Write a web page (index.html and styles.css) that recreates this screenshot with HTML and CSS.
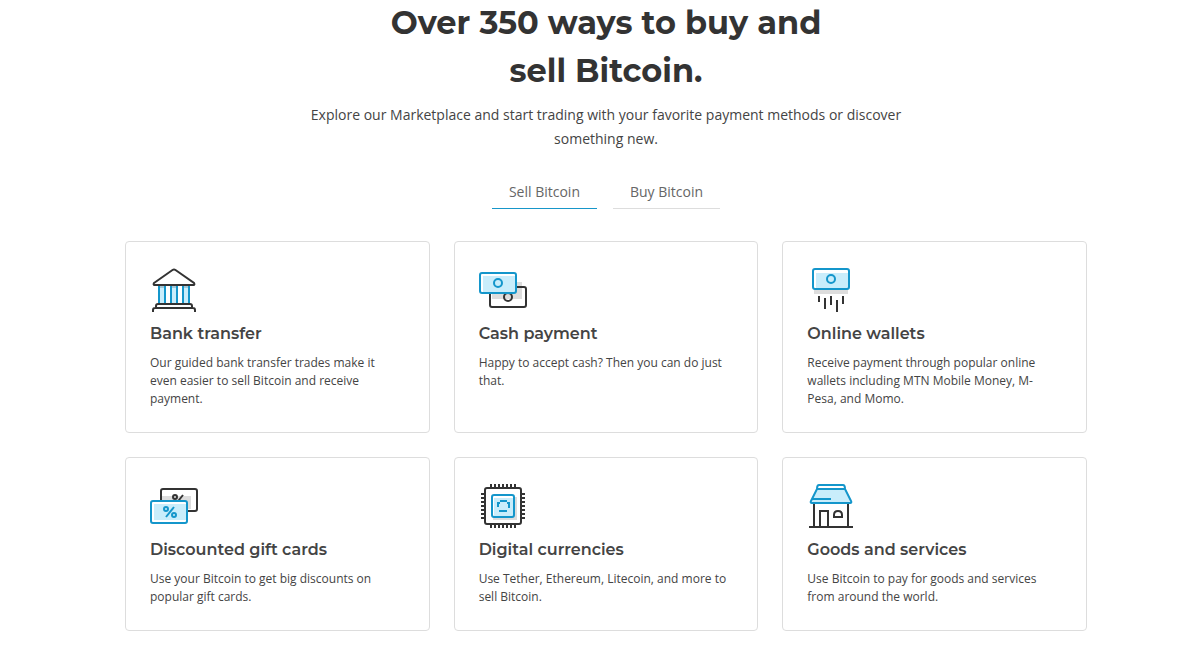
FILE: index.html
```html
<!DOCTYPE html>
<html lang="en">

<head>
  <meta charset="utf-8">
  <meta name="viewport" content="width=device-width, initial-scale=1">
  <title>Ways to buy and sell Bitcoin</title>
  <link rel="stylesheet" href="styles.css">
</head>

<body>

  <main class="marketplace">
    <header class="intro">
      <h1 class="intro-title">Over 350 ways to buy and sell Bitcoin.</h1>
      <p class="intro-text">Explore our Marketplace and start trading with your favorite payment methods or discover something new.</p>
    </header>

    <div class="tabs" role="tablist">
      <button class="tab active" type="button" role="tab" aria-selected="true">Sell Bitcoin</button>
      <button class="tab" type="button" role="tab" aria-selected="false">Buy Bitcoin</button>
    </div>

    <section class="cards">
      <article class="card">
        <svg class="icon" viewBox="0 0 48 48" aria-hidden="true">
          <path class="light" d="M9 19h6v19H9zM21 19h6v19h-6zM33 19h6v19h-6z"/>
          <path class="shade-blue" d="M9 19h6v3H9zM21 19h6v3h-6zM33 19h6v3h-6z"/>
          <path class="blue" d="M9 19v19M15 19v19M21 19v19M27 19v19M33 19v19M39 19v19"/>
          <path class="dark" d="M4 17 22.500 4Q24 3 25.500 4L44 17Q45 19 43.500 19H4.500Q3 19 4 17zM6 42v-2Q6 38 8 38h32q2 0 2 2v2M3 46v-2q0-2 2-2h38q2 0 2 2v2"/>
        </svg>
        <h2 class="card-title">Bank transfer</h2>
        <p class="card-text">Our guided bank transfer trades make it even easier to sell Bitcoin and receive payment.</p>
      </article>

      <article class="card">
        <svg class="icon" viewBox="0 0 48 48" aria-hidden="true">
          <path class="shade" d="M13 16h30v17H13z"/>
          <rect class="dark" x="11" y="21" width="36" height="20" rx="2"/>
          <circle class="dark" cx="29" cy="31" r="4"/>
          <rect class="white" x="1" y="7" width="36" height="20" rx="2"/>
          <path class="light" d="M4 10h33v17H4z"/>
          <rect class="blue" x="1" y="7" width="36" height="20" rx="2"/>
          <circle class="blue light" cx="19" cy="17" r="4"/>
        </svg>
        <h2 class="card-title">Cash payment</h2>
        <p class="card-text">Happy to accept cash? Then you can do just that.</p>
      </article>

      <article class="card">
        <svg class="icon" viewBox="0 0 48 48" aria-hidden="true">
          <path class="shade" d="M7 23h34v5H7z"/>
          <rect class="white" x="6" y="3" width="36" height="20" rx="2"/>
          <path class="light" d="M9 7h33v16H9z"/>
          <rect class="blue" x="6" y="3" width="36" height="20" rx="2"/>
          <circle class="blue light" cx="24" cy="13" r="4"/>
          <path class="dark" d="M12 30v6M18 32v11M24 30v9M30 34v12M36 30v8"/>
        </svg>
        <h2 class="card-title">Online wallets</h2>
        <p class="card-text">Receive payment through popular online wallets including MTN Mobile Money, M-Pesa, and Momo.</p>
      </article>

      <article class="card">
        <svg class="icon" viewBox="0 0 48 48" aria-hidden="true">
          <path class="shade" d="M12 14h29v13H12z"/>
          <rect class="dark" x="11" y="7" width="36" height="22" rx="2"/>
          <circle class="dark" cx="25" cy="15" r="2"/>
          <path class="dark" d="M33 13l-8 10"/>
          <rect class="white" x="1" y="19" width="36" height="22" rx="2"/>
          <path class="light" d="M4 22h33v16H4z"/>
          <rect class="blue" x="1" y="19" width="36" height="22" rx="2"/>
          <path class="blue" d="M24 25l-8 10"/>
          <circle class="blue" cx="16" cy="27" r="2"/>
          <circle class="blue" cx="24" cy="33" r="2"/>
        </svg>
        <h2 class="card-title">Discounted gift cards</h2>
        <p class="card-text">Use your Bitcoin to get big discounts on popular gift cards.</p>
      </article>

      <article class="card">
        <svg class="icon" viewBox="0 0 48 48" aria-hidden="true">
          <path class="shade" d="M14 15h24v23H14z"/>
          <rect class="dark" x="6" y="6" width="36" height="36" rx="2"/>
          <path class="dark" d="M12 2v4M16 2v4M20 2v4M24 2v4M28 2v4M32 2v4M36 2v4M12 42v4M16 42v4M20 42v4M24 42v4M28 42v4M32 42v4M36 42v4M2 12h4M2 16h4M2 20h4M2 24h4M2 28h4M2 32h4M2 36h4M42 12h4M42 16h4M42 20h4M42 24h4M42 28h4M42 32h4M42 36h4"/>
          <rect class="white" x="13" y="13" width="22" height="22" rx="2"/>
          <path class="light" d="M15 16h20v19H15z"/>
          <rect class="blue" x="13" y="13" width="22" height="22" rx="2"/>
          <path class="blue" d="M19 25v-4h2M21 19h7M28 21h2v5M20 29h8"/>
        </svg>
        <h2 class="card-title">Digital currencies</h2>
        <p class="card-text">Use Tether, Ethereum, Litecoin, and more to sell Bitcoin.</p>
      </article>

      <article class="card">
        <svg class="icon" viewBox="0 0 48 48" aria-hidden="true">
          <path class="dark" d="M7 21v24M41 21v24M2 45h44M13 45V29h8v16M27 35v-2q0-4 4-4t4 4v2z"/>
          <path class="light" d="M11 7h26l7 14H4z"/>
          <path class="blue" d="M12 3h24q2 0 2 4H10q0-4 2-4zM10 7 4 19Q3 21 5 21h38q2 0 1-2L38 7M5 17h19"/>
        </svg>
        <h2 class="card-title">Goods and services</h2>
        <p class="card-text">Use Bitcoin to pay for goods and services from around the world.</p>
      </article>
    </section>
  </main>

</body>

</html>
```
FILE: styles.css
```css
* {
  box-sizing: border-box;
}

body {
  margin: 0;
  padding-left: 11px;
  background-color: #fff;
  color: #444;
  font-family: "Open Sans", sans-serif;
}

.marketplace {
  width: 100%;
  max-width: 962px;
  margin: 0 auto;
}

.intro {
  max-width: 624px;
  margin: -1px auto 0;
  text-align: center;
}

.intro-title {
  max-width: 480px;
  margin: 0 auto 8px;
  color: #333;
  font-family: Montserrat, Inter, sans-serif;
  font-size: 32px;
  font-weight: 700;
  line-height: 48px;
}

.intro-text {
  margin: 0;
  font-size: 14px;
  line-height: 24px;
}

.tabs {
  display: flex;
  justify-content: center;
  gap: 16px;
  margin: 29px 0 32px;
}

.tab {
  padding: 0 17px 4px;
  border: none;
  border-bottom: 1px solid #ddd;
  background: none;
  color: #666;
  font-family: inherit;
  font-size: 14px;
  line-height: 24px;
  cursor: pointer;
}

.tab.active {
  border-color: #1796c9;
}

.cards {
  display: grid;
  grid-template-columns: repeat(auto-fit, minmax(280px, 1fr));
  gap: 24px;
}

.card {
  padding: 24px 28px 24px 24px;
  border: 1px solid #ddd;
  border-radius: 4px;
}

.card-title {
  margin: 8px 0;
  font-family: Montserrat, Inter, sans-serif;
  font-size: 16px;
  font-weight: 600;
  line-height: 24px;
}

.card-text {
  margin: 0;
  font-size: 12px;
  line-height: 18px;
}

/* icons */

.icon {
  display: block;
  width: 48px;
  height: 48px;
  fill: none;
  stroke-width: 2;
}

.dark {
  stroke: #333;
}

.light {
  fill: #c9edfb;
}

.blue {
  stroke: #1496cb;
}

.shade {
  fill: #ddd;
}

.shade-blue {
  fill: #a3c6d5;
}

.white {
  fill: #fff;
}
```
